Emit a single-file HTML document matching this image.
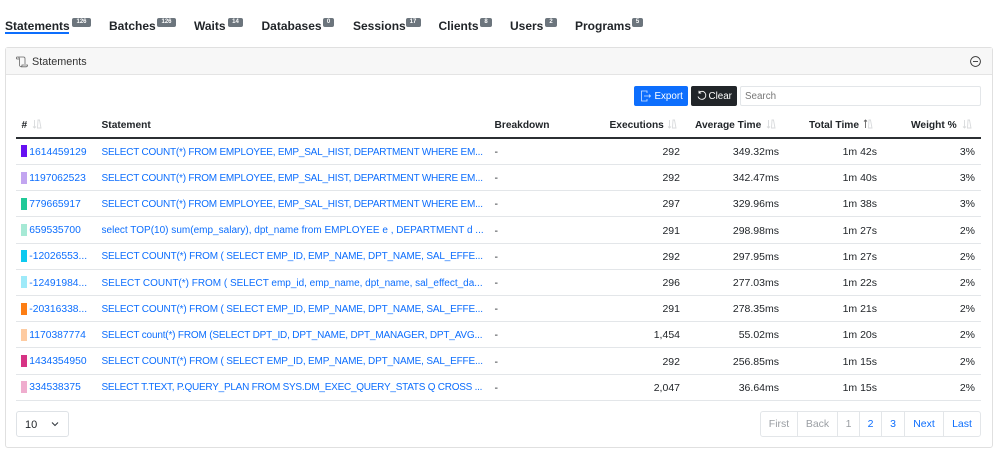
<!DOCTYPE html>
<html><head><meta charset="utf-8"><style>
html,body{margin:0;padding:0;width:1000px;height:454px;overflow:hidden;background:#fff;font-family:"Liberation Sans",sans-serif;color:#212529}
div,span,a{position:absolute;white-space:nowrap}
.tab{top:18px;font-size:12px;font-weight:bold;line-height:17px;color:#212529}
.bdg{top:18px;height:9px;line-height:9px;background:#6c757d;border-radius:2px;color:#fff;font-size:6px;font-weight:bold;text-align:center}
.r{left:16px;width:965px;height:25.200px;border-bottom:1px solid #e3e6e9;font-size:10.500px;line-height:26px}
.sw{left:5px;top:6.500px;width:6px;height:12px}
.id{left:13.300px;top:.7px;color:#0d6efd;font-size:10.300px}
.st{left:85.500px;top:.7px;color:#0d6efd;font-size:10px;letter-spacing:-.22px;width:384px;overflow:hidden}
.br{left:478.500px}
.c1,.c2,.c3,.c4{text-align:right;width:90px}
.c1{left:574px}.c2{left:673px}.c3{left:771px}.c4{left:869px}
.h{top:119px;font-size:10.200px;font-weight:bold;line-height:14px;color:#212529}
.pg{top:412px;height:24px;line-height:25px;font-size:10.500px;text-align:center;color:#0d6efd;border-right:1px solid #e3e6e9}
.dis{color:#9a9ea3}
</style></head><body>
<div class="tab" style="left:5px">Statements</div><div style="left:5px;top:32px;width:64px;height:2px;background:#0d6efd"></div><div class="bdg" style="left:72px;width:19px">126</div>
<div class="tab" style="left:109px">Batches</div><div class="bdg" style="left:157px;width:19px">126</div>
<div class="tab" style="left:194px">Waits</div><div class="bdg" style="left:228px;width:15px">14</div>
<div class="tab" style="left:261.500px">Databases</div><div class="bdg" style="left:323px;width:11px">0</div>
<div class="tab" style="left:353px">Sessions</div><div class="bdg" style="left:405.500px;width:15px">17</div>
<div class="tab" style="left:438.500px">Clients</div><div class="bdg" style="left:480px;width:12px">8</div>
<div class="tab" style="left:510px">Users</div><div class="bdg" style="left:545px;width:12px">2</div>
<div class="tab" style="left:575px">Programs</div><div class="bdg" style="left:632px;width:11px">5</div>

<div style="left:5px;top:47px;width:986px;height:399px;border:1px solid #e0e0e0;border-radius:3px"></div>
<div style="left:6px;top:48px;width:986px;height:26px;background:#f7f7f7;border-bottom:1px solid #e4e4e4"></div>
<svg style="position:absolute;left:16px;top:56px" width="12" height="12" viewBox="0 0 12 12" fill="none" stroke="#666" stroke-width=".8"><path d="M1 1h6.500c1 0 1.500.6 1.500 1.500V8M1 1c-.8 0-1 1.800 0 2h2M2.500 1.200C3.500 1.500 3.500 3 3.500 4v5c0 1 .8 1.800 1.800 1.800h5c.8 0 1.200-.8 1.200-1.800H6c0 1-.4 1.800-1 1.800"/></svg>
<div style="left:32px;top:55px;font-size:10.800px;line-height:14px;color:#333">Statements</div>
<svg style="position:absolute;left:970px;top:56px" width="11" height="11" viewBox="0 0 11 11" fill="none" stroke="#333" stroke-width=".9"><circle cx="5.500" cy="5.500" r="4.900"/><path d="M3 5.500h5"/></svg>

<div style="left:634px;top:86px;width:54px;height:20px;background:#0d6efd;border-radius:2px"></div>
<svg style="position:absolute;left:640px;top:90px" width="12" height="12" viewBox="0 0 12 12" fill="none" stroke="#d7e6ff" stroke-width=".8"><path d="M7 3V1H1.500v10H7V9M4 6h6.500M9 4.500 10.500 6 9 7.500"/></svg>
<div style="left:654.500px;top:90px;color:#fff;font-size:9.800px;line-height:13px">Export</div>
<div style="left:691px;top:86px;width:46px;height:20px;background:#212529;border-radius:2px"></div>
<svg style="position:absolute;left:696px;top:90px" width="11" height="11" viewBox="0 0 11 11" fill="none" stroke="#fff" stroke-width=".9"><path d="M3 2.500A4 4 0 1 1 2 6.500M3 .8v2.200h2.200"/></svg>
<div style="left:708.500px;top:90px;color:#fff;font-size:9.800px;line-height:13px">Clear</div>
<div style="left:740px;top:86px;width:239px;height:18px;border:1px solid #e3e6e9;border-radius:2px"></div>
<div style="left:745px;top:90px;color:#777;font-size:9.800px;line-height:13px">Search</div>

<div class="h" style="left:21.500px">#</div>
<div class="h" style="left:101.500px">Statement</div>
<div class="h" style="left:494.500px">Breakdown</div>
<div class="h" style="left:609.500px">Executions</div>
<div class="h" style="left:695px">Average Time</div>
<div class="h" style="left:809px">Total Time</div>
<div class="h" style="left:911px">Weight %</div>
<svg style="position:absolute;left:32px;top:119px" width="10" height="10" viewBox="0 0 10 10" fill="none" stroke="#d8dadc" stroke-width=".9"><path d="M2.500 1v8M1 7.500 2.500 9 4 7.500M6 1h1.500L9 9H5.500z"/></svg>
<svg style="position:absolute;left:667px;top:119px" width="10" height="10" viewBox="0 0 10 10" fill="none" stroke="#d8dadc" stroke-width=".9"><path d="M2.500 1v8M1 7.500 2.500 9 4 7.500M6 1h1.500L9 9H5.500z"/></svg>
<svg style="position:absolute;left:765.500px;top:119px" width="10" height="10" viewBox="0 0 10 10" fill="none" stroke="#d8dadc" stroke-width=".9"><path d="M2.500 1v8M1 7.500 2.500 9 4 7.500M6 1h1.500L9 9H5.500z"/></svg>
<svg style="position:absolute;left:863px;top:119px" width="10" height="10" viewBox="0 0 10 10" fill="none" stroke="#aaa" stroke-width=".9"><path stroke="#666" d="M2.500 9V1M1 2.500 2.500 1 4 2.500"/><path stroke="#d8dadc" d="M6 1h1.500L9 9H5.500z"/></svg>
<svg style="position:absolute;left:962px;top:119px" width="10" height="10" viewBox="0 0 10 10" fill="none" stroke="#d8dadc" stroke-width=".9"><path d="M2.500 1v8M1 7.500 2.500 9 4 7.500M6 1h1.500L9 9H5.500z"/></svg>
<div style="left:16px;top:137px;width:965px;height:1.500px;background:#2b2f33"></div>

<div class="r" style="top:138.900px"><span class="sw" style="background:#6610f2"></span><span class="id">1614459129</span><span class="st">SELECT COUNT(*) FROM EMPLOYEE, EMP_SAL_HIST, DEPARTMENT WHERE EM...</span><span class="br">-</span><span class="c1">292</span><span class="c2">349.32ms</span><span class="c3">1m 42s</span><span class="c4">3%</span></div>
<div class="r" style="top:165.100px"><span class="sw" style="background:#c2a5f0"></span><span class="id">1197062523</span><span class="st">SELECT COUNT(*) FROM EMPLOYEE, EMP_SAL_HIST, DEPARTMENT WHERE EM...</span><span class="br">-</span><span class="c1">292</span><span class="c2">342.47ms</span><span class="c3">1m 40s</span><span class="c4">3%</span></div>
<div class="r" style="top:191.300px"><span class="sw" style="background:#20c997"></span><span class="id">779665917</span><span class="st">SELECT COUNT(*) FROM EMPLOYEE, EMP_SAL_HIST, DEPARTMENT WHERE EM...</span><span class="br">-</span><span class="c1">297</span><span class="c2">329.96ms</span><span class="c3">1m 38s</span><span class="c4">3%</span></div>
<div class="r" style="top:217.500px"><span class="sw" style="background:#a6e9d5"></span><span class="id">659535700</span><span class="st" style="letter-spacing:.01px">select TOP(10) sum(emp_salary), dpt_name from EMPLOYEE e , DEPARTMENT d ...</span><span class="br">-</span><span class="c1">291</span><span class="c2">298.98ms</span><span class="c3">1m 27s</span><span class="c4">2%</span></div>
<div class="r" style="top:243.700px"><span class="sw" style="background:#0dcaf0"></span><span class="id">-12026553...</span><span class="st" style="letter-spacing:-.17px">SELECT COUNT(*) FROM ( SELECT EMP_ID, EMP_NAME, DPT_NAME, SAL_EFFE...</span><span class="br">-</span><span class="c1">292</span><span class="c2">297.95ms</span><span class="c3">1m 27s</span><span class="c4">2%</span></div>
<div class="r" style="top:269.900px"><span class="sw" style="background:#9eeaf9"></span><span class="id">-12491984...</span><span class="st" style="letter-spacing:-.01px">SELECT COUNT(*) FROM ( SELECT emp_id, emp_name, dpt_name, sal_effect_da...</span><span class="br">-</span><span class="c1">296</span><span class="c2">277.03ms</span><span class="c3">1m 22s</span><span class="c4">2%</span></div>
<div class="r" style="top:296.100px"><span class="sw" style="background:#fd7e14"></span><span class="id">-20316338...</span><span class="st" style="letter-spacing:-.17px">SELECT COUNT(*) FROM ( SELECT EMP_ID, EMP_NAME, DPT_NAME, SAL_EFFE...</span><span class="br">-</span><span class="c1">291</span><span class="c2">278.35ms</span><span class="c3">1m 21s</span><span class="c4">2%</span></div>
<div class="r" style="top:322.300px"><span class="sw" style="background:#fecba1"></span><span class="id">1170387774</span><span class="st" style="letter-spacing:-.18px">SELECT count(*) FROM (SELECT DPT_ID, DPT_NAME, DPT_MANAGER, DPT_AVG...</span><span class="br">-</span><span class="c1">1,454</span><span class="c2">55.02ms</span><span class="c3">1m 20s</span><span class="c4">2%</span></div>
<div class="r" style="top:348.500px"><span class="sw" style="background:#d63384"></span><span class="id">1434354950</span><span class="st" style="letter-spacing:-.17px">SELECT COUNT(*) FROM ( SELECT EMP_ID, EMP_NAME, DPT_NAME, SAL_EFFE...</span><span class="br">-</span><span class="c1">292</span><span class="c2">256.85ms</span><span class="c3">1m 15s</span><span class="c4">2%</span></div>
<div class="r" style="top:374.700px"><span class="sw" style="background:#efadce"></span><span class="id">334538375</span><span class="st" style="letter-spacing:-.25px">SELECT T.TEXT, P.QUERY_PLAN FROM SYS.DM_EXEC_QUERY_STATS Q CROSS ...</span><span class="br">-</span><span class="c1">2,047</span><span class="c2">36.64ms</span><span class="c3">1m 15s</span><span class="c4">2%</span></div>

<div style="left:16px;top:411px;width:51px;height:24px;border:1px solid #dee2e6;border-radius:3px"></div>
<div style="left:25px;top:417px;font-size:11px;line-height:16px">10</div>
<svg style="position:absolute;left:51px;top:421px" width="8" height="6" viewBox="0 0 8 6" fill="none" stroke="#343a40" stroke-width="1.100"><path d="M1 1.500 4 4.500 7 1.500"/></svg>

<div style="left:760px;top:411px;width:219px;height:24px;border:1px solid #e3e6e9;border-radius:3px"></div>
<div class="pg dis" style="left:761px;width:36px">First</div>
<div class="pg dis" style="left:798px;width:39px">Back</div>
<div class="pg dis" style="left:838px;width:21px">1</div>
<div class="pg" style="left:860px;width:21px">2</div>
<div class="pg" style="left:882px;width:22px">3</div>
<div class="pg" style="left:905px;width:38px">Next</div>
<div class="pg" style="left:944px;width:36px;border-right:0">Last</div>
</body></html>
